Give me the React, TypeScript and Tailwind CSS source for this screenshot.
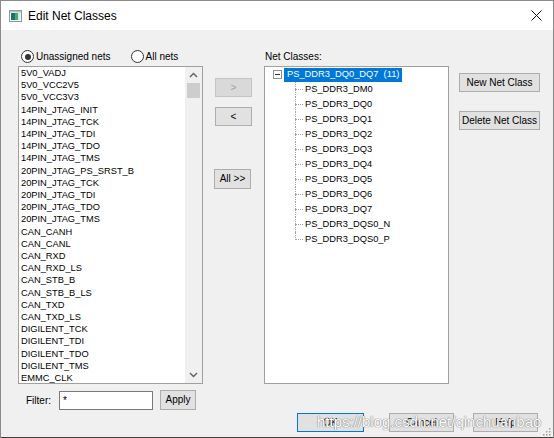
import React from 'react';

const unassignedNets = [
  '5V0_VADJ',
  '5V0_VCC2V5',
  '5V0_VCC3V3',
  '14PIN_JTAG_INIT',
  '14PIN_JTAG_TCK',
  '14PIN_JTAG_TDI',
  '14PIN_JTAG_TDO',
  '14PIN_JTAG_TMS',
  '20PIN_JTAG_PS_SRST_B',
  '20PIN_JTAG_TCK',
  '20PIN_JTAG_TDI',
  '20PIN_JTAG_TDO',
  '20PIN_JTAG_TMS',
  'CAN_CANH',
  'CAN_CANL',
  'CAN_RXD',
  'CAN_RXD_LS',
  'CAN_STB_B',
  'CAN_STB_B_LS',
  'CAN_TXD',
  'CAN_TXD_LS',
  'DIGILENT_TCK',
  'DIGILENT_TDI',
  'DIGILENT_TDO',
  'DIGILENT_TMS',
  'EMMC_CLK',
];

const classNets = [
  'PS_DDR3_DM0',
  'PS_DDR3_DQ0',
  'PS_DDR3_DQ1',
  'PS_DDR3_DQ2',
  'PS_DDR3_DQ3',
  'PS_DDR3_DQ4',
  'PS_DDR3_DQ5',
  'PS_DDR3_DQ6',
  'PS_DDR3_DQ7',
  'PS_DDR3_DQS0_N',
  'PS_DDR3_DQS0_P',
];

interface BtnProps {
  label: string;
  className?: string;
  disabled?: boolean;
  isDefault?: boolean;
}

function Btn({ label, className = '', disabled, isDefault }: BtnProps) {
  const tone = disabled
    ? 'bg-[#d9d9d9] border-[#c4c4c4] text-[#a0a0a0]'
    : isDefault
      ? 'bg-[#e1e1e1] border-[#0078d7] text-black'
      : 'bg-[#e1e1e1] border-[#adadad] text-black';
  return (
    <button
      type="button"
      className={`flex items-center justify-center border text-[10px] leading-none ${tone} ${className}`}
    >
      {label}
    </button>
  );
}

function Radio({ label, checked }: { label: string; checked?: boolean }) {
  return (
    <label className="flex items-center gap-[2px]">
      <span className="flex h-[13px] w-[13px] items-center justify-center rounded-full border border-[#333] bg-white">
        {checked && <span className="h-[6px] w-[6px] rounded-full bg-[#333]" />}
      </span>
      <span className="text-[10px]">{label}</span>
    </label>
  );
}

function Scrollbar() {
  return (
    <div className="flex w-[17px] flex-col bg-[#f0f0f0]">
      <div className="flex h-[16px] items-center justify-center">
        <svg width="9" height="6" viewBox="0 0 9 6">
          <path d="M1 5 L4.5 1.5 L8 5" fill="none" stroke="#606060" strokeWidth="1.4" />
        </svg>
      </div>
      <div className="mx-auto h-[15px] w-[13px] bg-[#cdcdcd]" />
      <div className="flex-1" />
      <div className="flex h-[16px] items-center justify-center">
        <svg width="9" height="6" viewBox="0 0 9 6">
          <path d="M1 1 L4.5 4.5 L8 1" fill="none" stroke="#606060" strokeWidth="1.4" />
        </svg>
      </div>
    </div>
  );
}

export default function App() {
  return (
    <div className="relative flex h-[438px] w-[554px] flex-col overflow-hidden border-x border-t border-[#8a8a8a] font-['Liberation_Sans',Arial,sans-serif] text-black">
      {/* Title bar */}
      <div className="flex h-[29px] shrink-0 items-center bg-white pl-[8px] pr-[11px]">
        <svg width="13" height="12" viewBox="0 0 13 12" className="mt-[1px]">
          <rect x="0.5" y="0.5" width="12" height="11" fill="#f4f6f7" stroke="#8a9aa0" />
          <rect x="2" y="3" width="4" height="7" fill="#1f6f6a" />
          <rect x="6" y="3" width="3" height="7" fill="#3fae6a" />
          <rect x="9" y="3" width="2.5" height="7" fill="#dfe6e8" />
          <rect x="1" y="1" width="11" height="1.5" fill="#b8c4c8" />
        </svg>
        <span className="ml-[6px] text-[12px]">Edit Net Classes</span>
        <svg width="11" height="11" viewBox="0 0 11 11" className="ml-auto">
          <path d="M0.5 0.5 L10.5 10.5 M10.5 0.5 L0.5 10.5" stroke="#111" strokeWidth="1" />
        </svg>
      </div>

      {/* Body */}
      <div className="flex flex-1 flex-col border-b border-[#4a3a32] bg-[#f0f0f0] pl-[17px] pt-[19px]">
        <div className="flex h-[362px]">
          {/* Unassigned nets column */}
          <div className="flex w-[185px] flex-col">
            <div className="mb-[2px] flex h-[15px] items-center pl-[3px]">
              <Radio label="Unassigned nets" checked />
              <div className="ml-[20px]">
                <Radio label="All nets" />
              </div>
            </div>
            <div className="flex h-[318px] border border-[#a0a0a0] bg-white">
              <div className="flex-1 overflow-hidden pl-[2px] text-[9.3px] leading-[12.2px]">
                {unassignedNets.map((n) => (
                  <div key={n} className="whitespace-nowrap">
                    {n}
                  </div>
                ))}
              </div>
              <Scrollbar />
            </div>
            <div className="mt-[6px] flex h-[21px] items-center">
              <span className="ml-[8px] text-[10px]">Filter:</span>
              <div className="ml-[8px] flex h-[19px] w-[94px] items-start border border-[#7a7a7a] bg-white pl-[3px] pt-[1px] text-[10px]">
                *
              </div>
              <Btn label="Apply" className="ml-[7px] h-[20px] w-[36px] -translate-y-[1px]" />
            </div>
          </div>

          {/* Move buttons */}
          <div className="ml-[12px] flex w-[37px] flex-col">
            <Btn label=">" disabled className="mt-[29px] h-[19px]" />
            <Btn label="<" className="mt-[10px] h-[19px]" />
            <Btn label="All >>" className="mt-[43px] h-[20px] -translate-x-[1px]" />
          </div>

          {/* Net classes tree */}
          <div className="ml-[12px] flex w-[185px] flex-col">
            <div className="mb-[2px] flex h-[15px] items-center pl-[1px] text-[10px]">Net Classes:</div>
            <div className="h-[318px] border border-[#a0a0a0] bg-white text-[9.3px]">
              <div className="flex h-[15px] items-center pl-[8px]">
                <span className="flex h-[9px] w-[9px] items-center justify-center border border-[#919191] bg-white">
                  <span className="h-[1px] w-[5px] bg-[#333]" />
                </span>
                <span className="ml-[2px] flex h-[14px] items-center whitespace-pre bg-[#0078d7] px-[3px] text-white">
                  PS_DDR3_DQ0_DQ7  (11)
                </span>
              </div>
              {classNets.map((n, i) => (
                <div key={n} className="flex h-[15px] items-center pl-[30px]">
                  <span className="relative h-full w-[9px]">
                    <span
                      className={`absolute left-0 top-0 w-0 border-l border-dotted border-[#a0a0a0] ${
                        i === classNets.length - 1 ? 'h-[8px]' : 'h-full'
                      }`}
                    />
                    <span className="absolute left-0 top-[7px] h-0 w-[8px] border-t border-dotted border-[#a0a0a0]" />
                  </span>
                  <span className="ml-[1px] whitespace-nowrap">{n}</span>
                </div>
              ))}
            </div>
          </div>

          {/* Class buttons */}
          <div className="ml-[10px] flex w-[81px] flex-col">
            <Btn label="New Net Class" className="mt-[24px] h-[19px]" />
            <Btn label="Delete Net Class" className="mt-[19px] h-[19px]" />
          </div>
        </div>

        {/* Dialog buttons */}
        <div className="mt-[2px] flex h-[19px] justify-end pr-[15px]">
          <Btn label="OK" isDefault className="w-[67px]" />
          <Btn label="Cancel" className="ml-[25px] w-[65px]" />
          <Btn label="Help" className="ml-[19px] w-[65px]" />
        </div>
      </div>

      {/* Resize grip */}
      <svg width="8" height="8" viewBox="0 0 8 8" className="absolute bottom-[2px] right-[2px]">
        <rect x="6" y="0" width="1.5" height="1.5" fill="#a0a0a0" />
        <rect x="3" y="3" width="1.5" height="1.5" fill="#a0a0a0" />
        <rect x="6" y="3" width="1.5" height="1.5" fill="#a0a0a0" />
        <rect x="0" y="6" width="1.5" height="1.5" fill="#a0a0a0" />
        <rect x="3" y="6" width="1.5" height="1.5" fill="#a0a0a0" />
        <rect x="6" y="6" width="1.5" height="1.5" fill="#a0a0a0" />
      </svg>

      {/* Watermark */}
      <div className="pointer-events-none absolute left-[316px] top-[411px] whitespace-nowrap text-[15px] leading-[20px] text-white [text-shadow:0_0_1px_#6f6f6f,0_0_1px_#6f6f6f]">
        https://blog.csdn.net/qinchuanbao
      </div>
    </div>
  );
}
